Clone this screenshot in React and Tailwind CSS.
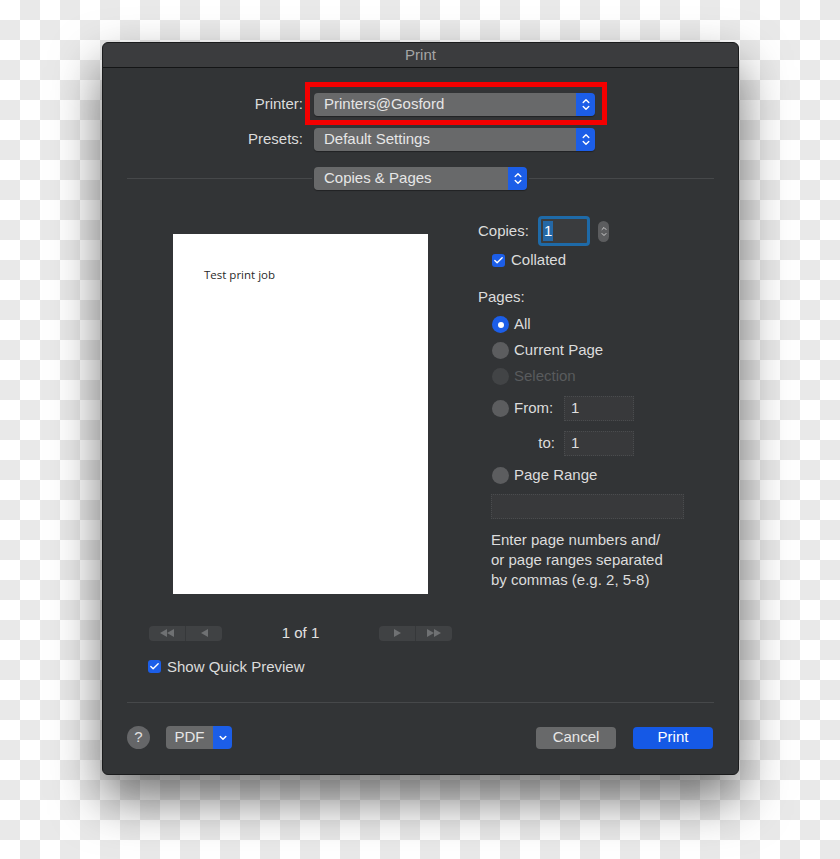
import { Check } from "lucide-react";

function UpDown() {
  return (
    <svg width="8" height="13" viewBox="0 0 8 13" fill="none" stroke="white" strokeWidth="1.4" strokeLinecap="round" strokeLinejoin="round">
      <path d="M1.2 4.6 4 1.8l2.8 2.8" />
      <path d="M1.2 8.4 4 11.2l2.8-2.8" />
    </svg>
  );
}

function Popup({ label, width }) {
  return (
    <div className={`flex h-[23px] ${width} rounded-[4px] overflow-hidden shadow-[0_1px_1px_rgba(0,0,0,0.35)]`}>
      <div className="flex-1 bg-[#68696a] pl-[10px] flex items-center text-[#e6e6e6]">{label}</div>
      <div className="w-[19px] bg-[#1c5ee8] flex items-center justify-center">
        <UpDown />
      </div>
    </div>
  );
}

function Checkbox() {
  return (
    <div className="w-[13px] h-[13px] rounded-[3px] bg-[#1c5ee8] flex items-center justify-center">
      <Check size={11} strokeWidth={3} color="white" />
    </div>
  );
}

function Radio({ on, dim }) {
  if (on) {
    return (
      <div className="w-[17px] h-[17px] rounded-full bg-[#1c5ee8] flex items-center justify-center">
        <div className="w-[6px] h-[6px] rounded-full bg-white" />
      </div>
    );
  }
  return <div className={`w-[17px] h-[17px] rounded-full ${dim ? "bg-[#424446]" : "bg-[#5c5d5f]"}`} />;
}

function Field({ value, width }) {
  return (
    <div className={`${width} h-[25px] bg-[#38393b] border border-dotted border-[#4a4c4e] flex items-center pl-[6px] text-[#dedede]`}>
      {value}
    </div>
  );
}

function Tri({ dir }) {
  return (
    <svg width="7" height="8" viewBox="0 0 7 8" fill="#6f7173">
      {dir === "l" ? <path d="M7 0v8L0 4z" /> : <path d="M0 0v8l7-4z" />}
    </svg>
  );
}

function PagerGroup({ left }) {
  return (
    <div className="flex w-[73px] h-[15px] rounded-[4px] bg-[#404244] overflow-hidden">
      <div className="flex-1 flex items-center justify-center border-r border-[#36383a]">
        {left ? (
          <span className="flex">
            <Tri dir="l" />
            <Tri dir="l" />
          </span>
        ) : (
          <Tri dir="r" />
        )}
      </div>
      <div className="flex-1 flex items-center justify-center">
        {left ? (
          <Tri dir="l" />
        ) : (
          <span className="flex">
            <Tri dir="r" />
            <Tri dir="r" />
          </span>
        )}
      </div>
    </div>
  );
}

export default function App() {
  return (
    <div
      className="w-[840px] h-[859px] overflow-hidden pt-[42px] pl-[102px] bg-[repeating-conic-gradient(#e9e9e9_0_25%,#ffffff_0_50%)] bg-[length:40px_40px] text-[15px] text-[#dcdcdc]"
      style={{ fontFamily: '"Liberation Sans", Arial, sans-serif' }}
    >
      <div className="w-[637px] h-[733px] flex flex-col rounded-[6px] bg-[#323436] border border-[#1b1c1d] shadow-[0_24px_50px_rgba(0,0,0,0.55)]">
        <div className="h-[25px] rounded-t-[6px] bg-[#3b3c3e] border-b border-[#141516] flex items-center justify-center text-[#a6a6a6]">
          Print
        </div>

        <div className="px-[24px] flex flex-col flex-1">
          <div className="pt-[25px] flex items-center">
            <div className="w-[176px] text-right">Printer:</div>
            <div className="ml-[11px] relative">
              <Popup label="Printers@Gosford" width="w-[281px]" />
              <div className="absolute -left-[9px] -right-[12px] -top-[11px] -bottom-[9px] border-[5px] border-[#f40000]" />
            </div>
          </div>
          <div className="mt-[12px] flex items-center">
            <div className="w-[176px] text-right">Presets:</div>
            <div className="ml-[11px]">
              <Popup label="Default Settings" width="w-[281px]" />
            </div>
          </div>
          <div className="mt-[16px] flex items-center gap-[2px]">
            <div className="flex-1 h-px bg-[#46484a]" />
            <Popup label="Copies & Pages" width="w-[213px]" />
            <div className="flex-1 h-px bg-[#46484a]" />
          </div>

          <div className="mt-[26px] flex items-start">
            <div className="w-[347px] flex flex-col items-center pt-[18px]">
              <div className="w-[255px] h-[360px] bg-white pl-[31px] pt-[32px]">
                <div className="text-[#2a2a2a] text-[11.5px]" style={{ fontFamily: '"Open Sans", sans-serif' }}>
                  Test print job
                </div>
              </div>
              <div className="mt-[28px] w-[303px] flex items-center justify-between">
                <PagerGroup left />
                <div className="text-[#e2e2e2]">1 of 1</div>
                <PagerGroup />
              </div>
              <div className="self-start ml-[21px] mt-[11px] flex items-center gap-[6px]">
                <Checkbox />
                <span>Show Quick Preview</span>
              </div>
            </div>

            <div className="pl-[4px] flex flex-col">
              <div className="flex items-center h-[30px]">
                <div className="w-[60px]">Copies:</div>
                <div className="w-[52px] h-[30px] rounded-[4px] border-[3px] border-[#1e6aa8] bg-[#3a3c3e] flex items-center pl-[2px]">
                  <span className="bg-[#2468a6] text-white px-[1px] leading-[20px]">1</span>
                </div>
                <div className="ml-[8px] w-[11px] h-[21px] rounded-full bg-[#5c5d5f] flex items-center justify-center">
                  <svg width="6" height="13" viewBox="0 0 6 13" fill="none" stroke="#d0d0d0" strokeWidth="1" strokeLinecap="round">
                    <path d="M1 4.5 3 2.5l2 2" />
                    <path d="M1 8.5l2 2 2-2" />
                  </svg>
                </div>
              </div>
              <div className="mt-[3px] ml-[14px] flex items-center gap-[6px]">
                <Checkbox />
                <span>Collated</span>
              </div>
              <div className="mt-[15px] leading-[20px]">Pages:</div>
              <div className="mt-[5px] ml-[14px] h-[26px] flex items-center gap-[5px]">
                <Radio on />
                <span>All</span>
              </div>
              <div className="ml-[14px] h-[26px] flex items-center gap-[5px]">
                <Radio />
                <span>Current Page</span>
              </div>
              <div className="ml-[14px] h-[26px] flex items-center gap-[5px]">
                <Radio dim />
                <span className="text-[#595b5d]">Selection</span>
              </div>
              <div className="mt-[6px] ml-[14px] h-[25px] flex items-center">
                <Radio />
                <span className="ml-[5px] w-[41px]">From:</span>
                <div className="ml-[9px]">
                  <Field value="1" width="w-[70px]" />
                </div>
              </div>
              <div className="mt-[10px] h-[25px] flex items-center">
                <span className="w-[77px] text-right">to:</span>
                <div className="ml-[9px]">
                  <Field value="1" width="w-[70px]" />
                </div>
              </div>
              <div className="mt-[7px] ml-[14px] h-[26px] flex items-center gap-[5px]">
                <Radio />
                <span>Page Range</span>
              </div>
              <div className="mt-[5px] ml-[13px]">
                <Field value="" width="w-[193px]" />
              </div>
              <div className="mt-[11px] ml-[13px] leading-[20px]">
                Enter page numbers and/
                <br />
                or page ranges separated
                <br />
                by commas (e.g. 2, 5-8)
              </div>
            </div>
          </div>

          <div className="mt-auto border-t border-[#46484a] pt-[23px] pb-[25px] flex items-center">
            <div className="w-[23px] h-[23px] rounded-full bg-[#656668] flex items-center justify-center text-[#e0e0e0]">
              ?
            </div>
            <div className="ml-[16px] flex h-[23px] w-[66px] rounded-[4px] overflow-hidden">
              <div className="flex-1 bg-[#68696a] flex items-center justify-center text-[#e6e6e6]">PDF</div>
              <div className="w-[19px] bg-[#1c5ee8] flex items-center justify-center">
                <svg width="8" height="6" viewBox="0 0 8 6" fill="none" stroke="white" strokeWidth="1.5" strokeLinecap="round" strokeLinejoin="round">
                  <path d="M1.2 1.5 4 4.3l2.8-2.8" />
                </svg>
              </div>
            </div>
            <div className="ml-auto w-[80px] h-[22px] rounded-[4px] bg-[#68696a] flex items-center justify-center text-[#e6e6e6]">
              Cancel
            </div>
            <div className="ml-[17px] mr-[1px] w-[80px] h-[22px] rounded-[4px] bg-[#1559e6] flex items-center justify-center text-white">
              Print
            </div>
          </div>
        </div>
      </div>
    </div>
  );
}
